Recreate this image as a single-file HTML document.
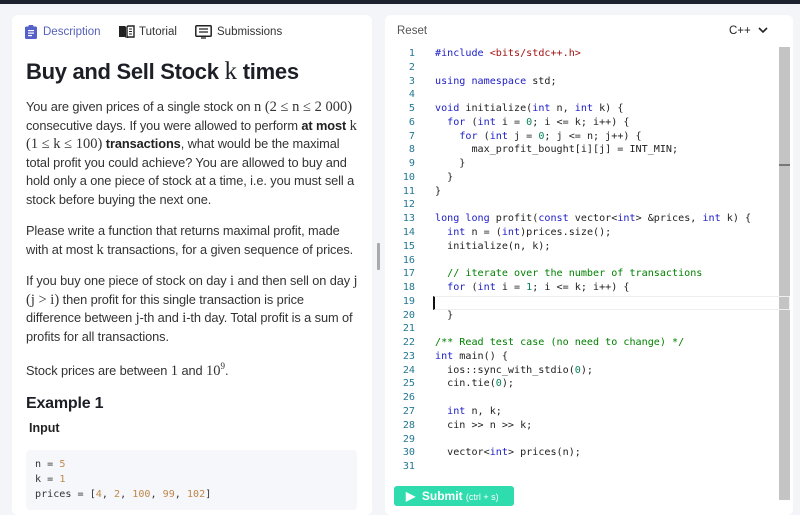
<!DOCTYPE html>
<html><head><style>
*{margin:0;padding:0;box-sizing:border-box}
body{width:800px;height:500px;overflow:hidden;background:#f3f5f8;font-family:"Liberation Sans",sans-serif;position:relative}
.top{position:absolute;left:0;top:0;width:800px;height:4px;background:#1c2230}
.lc{position:absolute;left:12px;top:15px;width:360px;height:500px;background:#fff;border-radius:6px}
.rc{position:absolute;left:385px;top:15px;width:408px;height:500px;background:#fff;border-radius:6px}
.tabs{position:absolute;top:25px;font-size:11.5px;color:#333;display:flex;align-items:center}
.p{position:absolute;left:26px;width:345px;font-size:12.8px;line-height:18.6px;color:#333;white-space:nowrap;letter-spacing:-0.1px}
.m{font-family:"Liberation Serif",serif;font-size:14.5px;letter-spacing:0}
b{font-weight:600;color:#222}
.code{position:absolute;left:385px;top:48px;width:394px;height:424px;overflow:hidden;font-family:"DejaVu Sans Mono",monospace;font-size:10.1px}
.ln{position:absolute;left:0;width:30px;text-align:right;color:#237893}
.cl{position:absolute;left:50px;white-space:pre;color:#222}
.k{color:#2020c8}.s{color:#a31515}.n{color:#098658}.c{color:#008000}
</style></head><body>
<div class="top"></div>
<div class="lc"></div>
<div class="rc"></div>
<div class="tabs" style="left:25px;color:#5561b8"><svg width="12" height="14" viewBox="0 0 12 14"><rect x="0" y="1.5" width="12" height="12.5" rx="1.5" fill="#5561c8"/><rect x="3.5" y="0" width="5" height="3" rx="1" fill="#5561c8"/><rect x="3" y="5" width="6" height="1.2" fill="#fff"/><rect x="3" y="7.5" width="6" height="1.2" fill="#fff"/><rect x="3" y="10" width="4" height="1.2" fill="#fff"/></svg><span style="margin-left:6px">Description</span></div>
<div class="tabs" style="left:118px"><svg width="17" height="13" viewBox="0 0 17 13"><path d="M1 1h6l1 1v11l-1-1H1z" fill="#222"/><path d="M9 2l1-1h6v11h-6l-1 1z" fill="none" stroke="#222" stroke-width="1.4"/><path d="M11 4h3M11 6.5h3M11 9h3" stroke="#222"/></svg><span style="margin-left:4px">Tutorial</span></div>
<div class="tabs" style="left:195px"><svg width="17" height="14" viewBox="0 0 17 14"><rect x="0.8" y="0.8" width="15.4" height="10.5" rx="1" fill="none" stroke="#222" stroke-width="1.5"/><path d="M4 4h9M4 7h9M6 13h5" stroke="#222" stroke-width="1.3"/></svg><span style="margin-left:5px">Submissions</span></div>
<div style="position:absolute;left:26px;top:58px;font-size:22px;font-weight:700;color:#1c1f26;letter-spacing:-0.3px">Buy and Sell Stock <span class="m" style="font-size:25px;font-weight:400">k</span> times</div>
<div class="p" style="top:98px">You are given prices of a single stock on <span class="m">n (2 ≤ n ≤ 2 000)</span><br>consecutive days. If you were allowed to perform <b>at most</b> <span class="m">k</span><br><span class="m">(1 ≤ k ≤ 100)</span> <b>transactions</b>, what would be the maximal<br>total profit you could achieve? You are allowed to buy and<br>hold only a one piece of stock at a time, i.e. you must sell a<br>stock before buying the next one.</div>
<div class="p" style="top:222px">Please write a function that returns maximal profit, made<br>with at most <span class="m">k</span> transactions, for a given sequence of prices.</div>
<div class="p" style="top:272px">If you buy one piece of stock on day <span class="m">i</span> and then sell on day <span class="m">j</span><br><span class="m">(j &gt; i)</span> then profit for this single transaction is price<br>difference between <span class="m">j</span>-th and <span class="m">i</span>-th day. Total profit is a sum of<br>profits for all transactions.</div>
<div class="p" style="top:357px">Stock prices are between <span class="m">1</span> and <span class="m">10<sup style="font-size:9px">9</sup></span>.</div>
<div style="position:absolute;left:26px;top:395px;font-size:16px;font-weight:700;color:#1c1f26;letter-spacing:-0.2px">Example 1</div>
<div style="position:absolute;left:29px;top:421px;font-size:12.5px;font-weight:700;color:#222">Input</div>
<div style="position:absolute;left:26px;top:450px;width:331px;height:60px;background:#f5f7fa;border-radius:4px;font-family:'DejaVu Sans Mono',monospace;font-size:10.1px;color:#333;line-height:15px;padding:7px 9px;white-space:pre">n = <span style="color:#c0874a">5</span>
k = <span style="color:#c0874a">1</span>
prices = [<span style="color:#c0874a">4</span>, <span style="color:#c0874a">2</span>, <span style="color:#c0874a">100</span>, <span style="color:#c0874a">99</span>, <span style="color:#c0874a">102</span>]</div>
<div style="position:absolute;left:377px;top:243px;width:3px;height:27px;background:#aaa;border-radius:1px"></div>
<div style="position:absolute;left:397px;top:25px;font-size:11.5px;color:#555">Reset</div>
<div style="position:absolute;left:729px;top:25px;font-size:11.5px;color:#222">C++ <svg width="10" height="7" viewBox="0 0 10 7" style="margin-left:4px"><path d="M1 1l4 4 4-4" fill="none" stroke="#222" stroke-width="1.6"/></svg></div>
<div class="code" id="code"></div>
<div style="position:absolute;left:779px;top:47px;width:11px;height:453px;background:#c4c4c4"></div>
<div style="position:absolute;left:779px;top:164px;width:11px;height:2px;background:#777"></div>
<div style="position:absolute;left:433px;top:296px;width:357px;height:14px;border:1px solid #eee;border-left:2px solid #111"></div>
<div style="position:absolute;left:394px;top:486px;width:120px;height:20px;background:#2fdcae;border-radius:3px;color:#fff;font-size:12px;font-weight:600;padding:3px 0 0 12px">▶&nbsp; Submit <span style="font-size:9px;font-weight:400">(ctrl + s)</span></div>
<script>
var L=['<span class="k">#include</span> <span class="s">&lt;bits/stdc++.h&gt;</span>','','<span class="k">using namespace</span> std;','','<span class="k">void</span> initialize(<span class="k">int</span> n, <span class="k">int</span> k) {','  <span class="k">for</span> (<span class="k">int</span> i = <span class="n">0</span>; i &lt;= k; i++) {','    <span class="k">for</span> (<span class="k">int</span> j = <span class="n">0</span>; j &lt;= n; j++) {','      max_profit_bought[i][j] = INT_MIN;','    }','  }','}','','<span class="k">long long</span> profit(<span class="k">const</span> vector&lt;<span class="k">int</span>&gt; &amp;prices, <span class="k">int</span> k) {','  <span class="k">int</span> n = (<span class="k">int</span>)prices.size();','  initialize(n, k);','','  <span class="c">// iterate over the number of transactions</span>','  <span class="k">for</span> (<span class="k">int</span> i = <span class="n">1</span>; i &lt;= k; i++) {','','  }','','<span class="c">/** Read test case (no need to change) */</span>','<span class="k">int</span> main() {','  ios::sync_with_stdio(<span class="n">0</span>);','  cin.tie(<span class="n">0</span>);','','  <span class="k">int</span> n, k;','  cin &gt;&gt; n &gt;&gt; k;','','  vector&lt;<span class="k">int</span>&gt; prices(n);',''];
var h='';for(var i=0;i<L.length;i++){var t=i*13.77;h+='<div class="ln" style="top:'+t+'px">'+(i+1)+'</div><div class="cl" style="top:'+t+'px">'+L[i]+'</div>';}
document.getElementById('code').innerHTML=h;
</script>
</body></html>
